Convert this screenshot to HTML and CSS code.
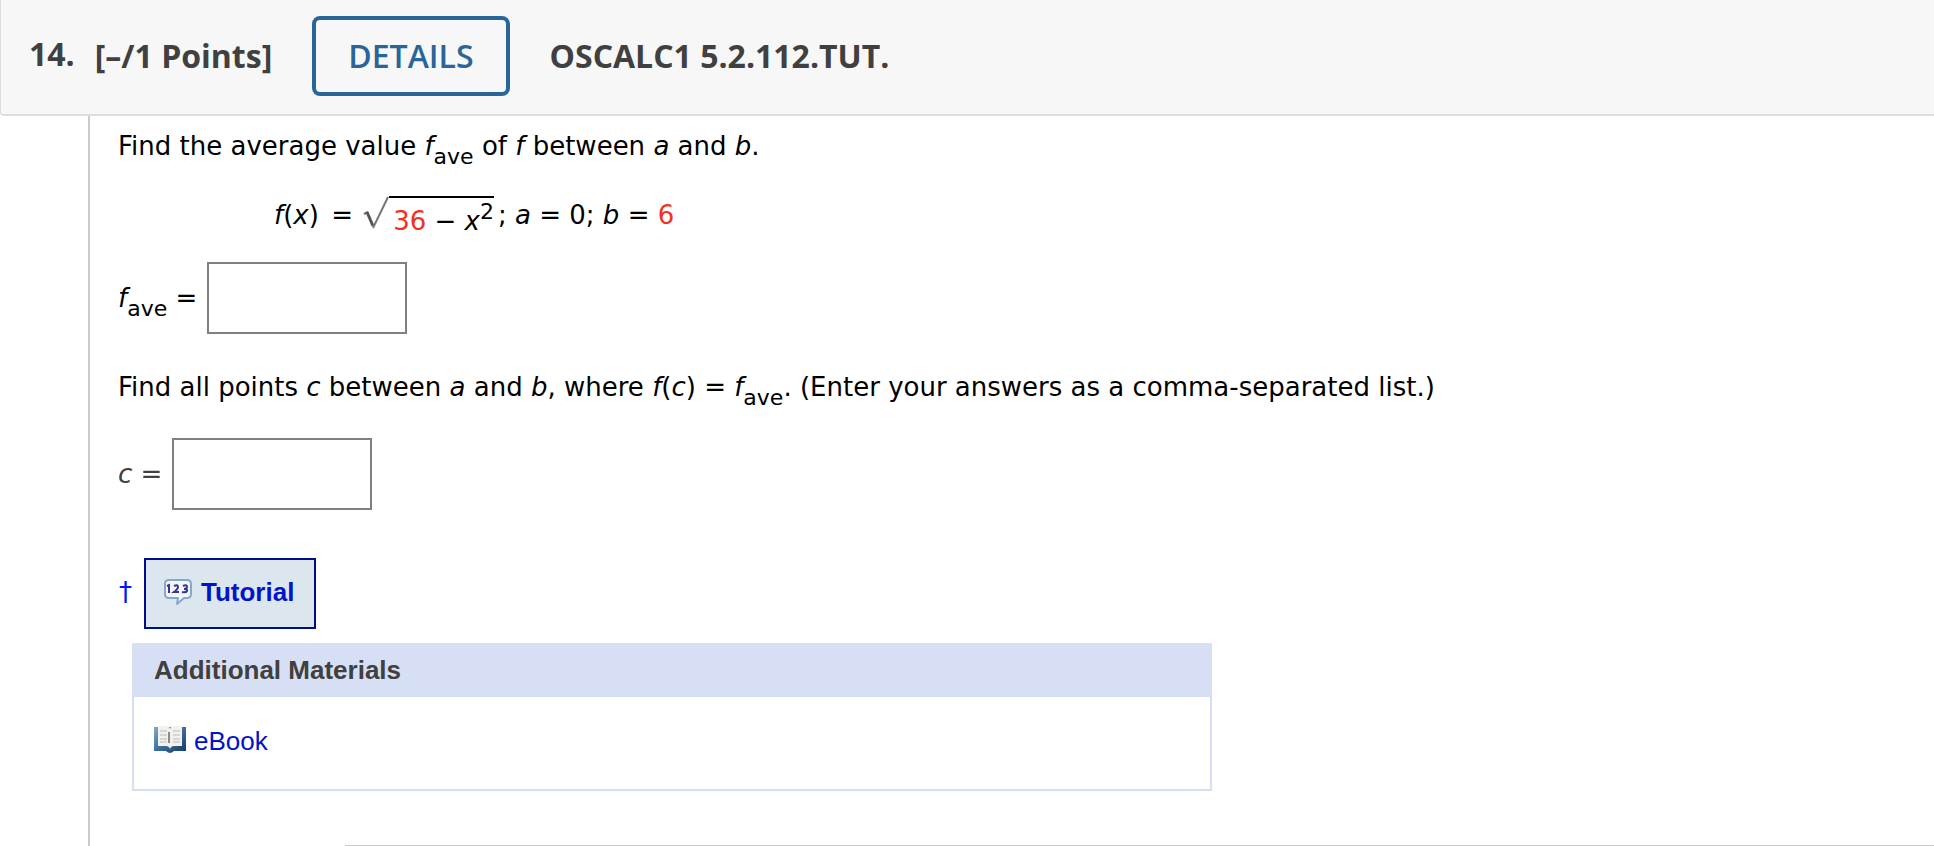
FILE: index.html
```
<!DOCTYPE html>
<html lang="en">
<head>
<meta charset="utf-8">
<title>Question 14</title>
<link rel="stylesheet" href="styles.css">
</head>
<body>
<header class="question-header">
  <div class="question-number">14.</div>
  <div class="points">[–/1 Points]</div>
  <button class="details" type="button">DETAILS</button>
  <div class="question-name">OSCALC1 5.2.112.TUT.</div>
</header>
<main class="question-body">
  <p class="line">Find the average value <i>f</i><sub>ave</sub> of <i>f</i> between <i>a</i> and <i>b</i>.</p>
  <div class="formula"><i>f</i>(<i>x</i>) <span class="equals">=</span> <span class="root"><svg class="radical" viewBox="0 0 26 34" aria-hidden="true"><path d="M1 18l4-2" fill="none" stroke="#666" stroke-width="2"/><path d="M4 16l6 14" fill="none" stroke="#555" stroke-width="3"/><path d="M10 32L25 1" fill="none" stroke="#777" stroke-width="2"/></svg><span class="radicand"><span class="value">36</span> − <i>x</i><sup>2</sup></span></span>; <i>a</i> = 0; <i>b</i> = <span class="value">6</span></div>
  <div class="answer">
    <label for="fave"><i>f</i><sub>ave</sub> =</label>
    <input id="fave" class="answer-box" type="text">
  </div>
  <p class="line second">Find all points <i>c</i> between <i>a</i> and <i>b</i>, where <i>f</i>(<i>c</i>) = <i>f</i><sub>ave</sub>. (Enter your answers as a comma-separated list.)</p>
  <div class="answer muted">
    <label for="points"><i>c</i> =</label>
    <input id="points" class="answer-box" type="text">
  </div>
  <div class="tutorial-row">
    <span class="dagger">†</span>
    <button class="tutorial" type="button">
      <svg class="bubble" viewBox="0 0 30 28" aria-hidden="true">
        <path d="M6 2h18q4 0 4 4v10q0 4-4 4h-3l-7 6 1-6H6q-4 0-4-4V6q0-4 4-4z" fill="#f2f6fd" stroke="#85a9cb" stroke-width="2" stroke-linejoin="round"/>
        <path d="M4 8l2-1v8M11 8q4-2 4 1 0 2-4 5h5M20 8q4-2 4 1 0 2-3 2 4 0 3 2-1 2-5 1" fill="none" stroke="#39358c" stroke-width="2"/>
      </svg>
      <span>Tutorial</span>
    </button>
  </div>
  <section class="materials">
    <h2 class="materials-title">Additional Materials</h2>
    <div class="materials-body">
      <a class="ebook" href="#ebook">
        <svg class="book" viewBox="0 0 32 28" aria-hidden="true">
          <defs><linearGradient id="cover" x1="0" y1="0" x2="1" y2="1"><stop offset="0" stop-color="#83a9c9"/><stop offset=".5" stop-color="#3c6c99"/><stop offset="1" stop-color="#143a63"/></linearGradient></defs>
          <path d="M0 2h32v24H20q-4 4-8 0H0z" fill="url(#cover)"/>
          <path d="M4 1h8q3 0 4 3 1-3 4-3h8v20h-8q-3 0-4 3-1-3-4-3H4z" fill="#f3f1ed"/>
          <path d="M6 6h7M6 10h7M6 14h7M6 17h7M19 6h7M19 10h7M19 14h7M19 17h7" stroke="#bbb9b8" stroke-width="1"/>
          <path d="M15 7v11" stroke="#8b8b8b" stroke-width="2"/>
        </svg>
        <span>eBook</span>
      </a>
    </div>
  </section>
  <hr class="divider">
</main>
</body>
</html>
```
FILE: styles.css
```
* { box-sizing: border-box; }

body {
  margin: 0;
  background: #fff;
  color: #000;
  font-family: Verdana, "DejaVu Sans", sans-serif;
  font-size: 26px;
  line-height: 32px;
}

.question-header {
  display: flex;
  align-items: center;
  padding: 16px 28px 18px;
  border-left: 1px solid #ddd;
  border-bottom: 2px solid #ddd;
  border-bottom-left-radius: 4px;
  background: #f7f7f7;
  color: #404040;
  font-family: "Open Sans", sans-serif;
  font-size: 32px;
  font-weight: 700;
  line-height: 40px;
}

.question-number { margin-right: 20px; padding-bottom: 4px; }

.details {
  height: 80px;
  margin: 0 40px;
  padding: 0 32px;
  border: 4px solid #286599;
  border-radius: 8px;
  background: transparent;
  color: #286599;
  font: 600 32px/40px "Open Sans", sans-serif;
}

.question-body {
  margin-left: 88px;
  padding: 14px 0 0 28px;
  border-left: 2px solid #ccc;
}

.line { margin: 0; }

sub, sup {
  font-size: 22px;
  line-height: 0;
}

sub { vertical-align: -9px; }
sup { vertical-align: 11px; }

.formula { margin: 34px 0 0 156px; }

.equals { margin: 0 2px 0 4px; }

.root {
  display: inline-flex;
  align-items: baseline;
  margin-right: 4px;
  vertical-align: -6px;
}

.radical {
  width: 26px;
  height: 34px;
}

.radicand {
  padding: 7px 0 0 4px;
  border-top: 2px solid #000;
}

.value { color: #f52f22; }

.answer {
  display: flex;
  align-items: center;
  gap: 10px;
  margin-top: 25px;
}

.answer-box {
  width: 200px;
  height: 72px;
  padding: 0 12px;
  border: 2px solid #808080;
  background: #fff;
  font: inherit;
}

.second { margin-top: 37px; }

.muted {
  margin-top: 35px;
  color: #404040;
}

.tutorial-row {
  display: flex;
  align-items: center;
  gap: 12px;
  margin-top: 48px;
}

.dagger {
  padding: 0 0 4px 1px;
  color: #0014ff;
}

.tutorial {
  display: flex;
  align-items: center;
  gap: 8px;
  height: 71px;
  padding: 0 20px 4px 17px;
  border: 2px solid #000f87;
  background: #dce6ee;
  color: #0014c8;
  font: 700 26px/32px Arial, "Liberation Sans", sans-serif;
}

.bubble {
  width: 30px;
  height: 28px;
}

.materials {
  width: 1080px;
  max-width: calc(100% - 28px);
  margin: 14px 0 0 14px;
  border: 2px solid #d7dff4;
  font-family: Arial, "Liberation Sans", sans-serif;
}

.materials-title {
  margin: 0;
  padding: 9px 20px 11px;
  background: #d7dff4;
  font-size: 26px;
  line-height: 32px;
  color: #404040;
}

.materials-body {
  display: flex;
  padding: 28px 20px 32px;
}

.ebook {
  display: flex;
  align-items: flex-start;
  gap: 8px;
  color: #0014c8;
  text-decoration: none;
}

.book {
  width: 32px;
  height: 28px;
}

.divider {
  margin: 54px 0 0 227px;
  border: 0;
  border-top: 1px solid #ccc;
}
```
